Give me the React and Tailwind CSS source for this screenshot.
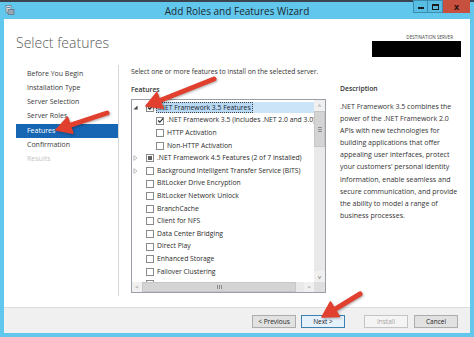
import React from "react";

const navItems = [
  { label: "Before You Begin" },
  { label: "Installation Type" },
  { label: "Server Selection" },
  { label: "Server Roles" },
  { label: "Features", active: true },
  { label: "Confirmation" },
  { label: "Results", disabled: true },
];

const features = [
  { label: ".NET Framework 3.5 Features", level: 1, expander: "open", check: "checked", selected: true },
  { label: ".NET Framework 3.5 (includes .NET 2.0 and 3.0)", level: 2, check: "checked" },
  { label: "HTTP Activation", level: 2 },
  { label: "Non-HTTP Activation", level: 2 },
  { label: ".NET Framework 4.5 Features (2 of 7 installed)", level: 1, expander: "closed", check: "partial" },
  { label: "Background Intelligent Transfer Service (BITS)", level: 1, expander: "closed" },
  { label: "BitLocker Drive Encryption", level: 1 },
  { label: "BitLocker Network Unlock", level: 1 },
  { label: "BranchCache", level: 1 },
  { label: "Client for NFS", level: 1 },
  { label: "Data Center Bridging", level: 1 },
  { label: "Direct Play", level: 1 },
  { label: "Enhanced Storage", level: 1 },
  { label: "Failover Clustering", level: 1 },
];

const descLines = [
  ".NET Framework 3.5 combines the",
  "power of the .NET Framework 2.0",
  "APIs with new technologies for",
  "building applications that offer",
  "appealing user interfaces, protect",
  "your customers' personal identity",
  "information, enable seamless and",
  "secure communication, and provide",
  "the ability to model a range of",
  "business processes.",
];

function Check({ state }) {
  return (
    <span className="flex h-[8px] w-[8px] shrink-0 items-center justify-center border border-[#8a8a8a] bg-white">
      {state === "checked" && (
        <svg viewBox="0 0 8 8" className="h-[7px] w-[7px] overflow-visible">
          <path d="M1.3 4 L3.2 6 L6.9 1.5" fill="none" stroke="#222" strokeWidth="1.3" />
        </svg>
      )}
      {state === "partial" && <span className="h-[4px] w-[4px] bg-[#5e5e5e]" />}
    </span>
  );
}

function Expander({ kind }) {
  if (kind === "open")
    return (
      <svg viewBox="0 0 6 6" className="h-[5px] w-[5px]">
        <path d="M5.5 0.5 L5.5 5.5 L0.5 5.5 Z" fill="#404040" />
      </svg>
    );
  if (kind === "closed")
    return (
      <svg viewBox="0 0 6 8" className="h-[6px] w-[5px]">
        <path d="M0.8 0.8 L5 4 L0.8 7.2 Z" fill="none" stroke="#a0a0a0" strokeWidth="0.9" />
      </svg>
    );
  return null;
}

function Arrow({ x1, y1, x2, y2 }) {
  const dx = x2 - x1;
  const dy = y2 - y1;
  const len = Math.sqrt(dx * dx + dy * dy);
  const ux = dx / len;
  const uy = dy / len;
  const L = 15;
  const W = 8.5;
  const bx = x2 - ux * L;
  const by = y2 - uy * L;
  const pts = `${x2},${y2} ${bx - uy * W},${by + ux * W} ${bx + uy * W},${by - ux * W}`;
  return (
    <g>
      <line x1={x1} y1={y1} x2={bx + ux * 2} y2={by + uy * 2} stroke="#e1402f" strokeWidth="5" strokeLinecap="round" />
      <polygon points={pts} fill="#e1402f" strokeLinejoin="round" stroke="#e1402f" strokeWidth="1.5" />
    </g>
  );
}

function Button({ children, variant }) {
  const cls =
    variant === "primary"
      ? "border-[#3c7fb1] bg-[#e5f1fb] text-[#1e1e1e]"
      : variant === "disabled"
      ? "border-[#c4c4c4] bg-[#f4f4f4] text-[#a3a3a3]"
      : "border-[#adadad] bg-[#e1e1e1] text-[#1e1e1e]";
  return (
    <div className={`flex h-[13px] w-[44px] items-center justify-center border text-[6.5px] ${cls}`}>{children}</div>
  );
}

export default function App() {
  return (
    <div className="relative flex h-[337px] w-[474px] flex-col overflow-hidden bg-[#62c7ec] font-['Open_Sans',sans-serif] text-[#1e1e1e]">
      {/* title bar */}
      <div className="relative flex h-[19px] shrink-0 items-center justify-center border-t-2 border-[#3b4550]">
        <svg viewBox="0 0 10 10" className="absolute left-[5px] top-[3px] h-[10px] w-[10px]">
          <rect x="1" y="0.5" width="5" height="7" fill="#d9dde2" stroke="#6b7785" strokeWidth="0.7" />
          <rect x="3" y="4.5" width="6" height="5" fill="#9aa6b3" stroke="#56626f" strokeWidth="0.6" />
          <rect x="2" y="2" width="3" height="0.9" fill="#3d86c6" />
        </svg>
        <span className="text-[10px] leading-none text-[#1b2a33]">Add Roles and Features Wizard</span>
        <div className="absolute right-[4px] top-[-2px] flex h-[13px]">
          <div className="flex h-full w-[15px] items-end justify-center border border-[#3d8db1] bg-[#58bde3] pb-[3px]">
            <span className="h-[2px] w-[6px] bg-[#1c1c1c]" />
          </div>
          <div className="flex h-full w-[15px] items-center justify-center border border-l-0 border-[#3d8db1] bg-[#58bde3]">
            <span className="h-[6px] w-[7px] border border-t-2 border-[#1c1c1c]" />
          </div>
          <div className="flex h-full w-[27px] items-center justify-center bg-[#c7503f] text-[9px] font-bold leading-none text-[#2a1410]">
            x
          </div>
        </div>
      </div>

      {/* window body */}
      <div className="flex flex-1 flex-col px-[4px] pb-[4px]">
        <div className="flex flex-1 flex-col bg-white">
          {/* header */}
          <div className="flex h-[46px] shrink-0 items-start justify-between pl-[12px] pr-[9px]">
            <div className="mt-[14px] text-[14px] font-light leading-[20px] text-[#5a5a5a]">Select features</div>
            <div className="mt-[15px] flex flex-col items-end">
              <div className="mr-[8px] text-[4.6px] leading-[6px] text-[#444]">DESTINATION SERVER</div>
              <div className="mt-[1px] h-[16px] w-[89px] bg-black" />
            </div>
          </div>

          {/* middle */}
          <div className="flex flex-1 pb-[11px]">
            <div className="flex w-[115px] shrink-0 flex-col border-r border-[#d6d6d6] pt-[2px]">
              {navItems.map((item) => (
                <div
                  key={item.label}
                  className={`ml-[12px] flex h-[14.2px] items-center pl-[11px] text-[7px] ${
                    item.active ? "bg-[#1766b4] text-white" : item.disabled ? "text-[#c4c4c4]" : "text-[#3a3a3a]"
                  }`}
                >
                  {item.label}
                </div>
              ))}
            </div>

            <div className="flex w-[207px] shrink-0 flex-col pl-[12px]">
              <div className="mt-[1px] h-[12px] whitespace-nowrap text-[6.7px] leading-[12px] text-[#333]">
                Select one or more features to install on the selected server.
              </div>
              <div className="mt-[6px] h-[12px] text-[6.8px] font-semibold leading-[12px] text-[#333]">Features</div>
              <div className="mt-[3px] flex h-[194px] w-[195px] flex-col border border-[#9a9ea6]">
                <div className="flex h-[182px]">
                  <div className="flex-1 overflow-hidden pt-[1.7px]">
                    {features.map((f) => (
                      <div key={f.label} className="flex h-[12.6px] items-center">
                        <div className={`flex shrink-0 items-center ${f.level === 2 ? "w-[24px]" : "w-[14px]"} pl-[1px]`}>
                          <Expander kind={f.expander} />
                        </div>
                        <Check state={f.check} />
                        {f.selected ? (
                          <div className="ml-[2px] flex h-[11px] flex-1 items-center bg-[#cbe4f8]">
                            <span className="border border-dotted border-[#444] bg-[#b7d9f5] px-[1px] text-[6.8px] leading-[9px] whitespace-nowrap">
                              {f.label}
                            </span>
                          </div>
                        ) : (
                          <span className="ml-[3px] whitespace-nowrap text-[6.8px] text-[#2b2b2b]">{f.label}</span>
                        )}
                      </div>
                    ))}
                    <div className="flex h-[12.6px] items-center pl-[14px]">
                      <Check />
                    </div>
                  </div>
                  <div className="flex w-[11px] shrink-0 flex-col bg-[#e9e9e9]">
                    <div className="flex h-[11px] items-center justify-center bg-[#f0f0f0] text-[6px] leading-none text-[#6a6a6a]">^</div>
                    <div className="flex h-[36px] items-center justify-center border border-[#c6c6c6] bg-[#d4d4d4]">
                      <div className="flex flex-col gap-[1px]">
                        <span className="h-[1px] w-[4px] bg-[#8a8a8a]" />
                        <span className="h-[1px] w-[4px] bg-[#8a8a8a]" />
                        <span className="h-[1px] w-[4px] bg-[#8a8a8a]" />
                      </div>
                    </div>
                    <div className="flex-1" />
                    <div className="flex h-[11px] items-center justify-center bg-[#f0f0f0] text-[6px] leading-none text-[#6a6a6a]">v</div>
                  </div>
                </div>
                <div className="flex h-[10px] shrink-0 bg-[#e9e9e9]">
                  <div className="flex w-[10px] items-center justify-center bg-[#f0f0f0] text-[6px] leading-none text-[#6a6a6a]">&lt;</div>
                  <div className="flex w-[154px] items-center justify-center border border-[#c6c6c6] bg-[#d4d4d4]">
                    <div className="flex gap-[1px]">
                      <span className="h-[4px] w-[1px] bg-[#8a8a8a]" />
                      <span className="h-[4px] w-[1px] bg-[#8a8a8a]" />
                      <span className="h-[4px] w-[1px] bg-[#8a8a8a]" />
                    </div>
                  </div>
                  <div className="flex-1" />
                  <div className="flex w-[10px] items-center justify-center bg-[#f0f0f0] text-[6px] leading-none text-[#6a6a6a]">&gt;</div>
                  <div className="w-[11px] bg-[#dedede]" />
                </div>
              </div>
            </div>

            <div className="ml-[14px] flex flex-1 flex-col">
              <div className="mt-[18px] h-[12px] text-[6.8px] font-semibold leading-[12px] text-[#333]">Description</div>
              <div className="mt-[6px] text-[7px] leading-[12.1px] text-[#333]">
                {descLines.map((l) => (
                  <div key={l} className="whitespace-nowrap">
                    {l}
                  </div>
                ))}
              </div>
            </div>
          </div>

          {/* footer */}
          <div className="flex h-[26px] shrink-0 items-start justify-end border-t border-[#dcdcdc] bg-[#f0f0f0] pr-[12px] pt-[7px]">
            <Button>&lt; Previous</Button>
            <div className="ml-[5px]">
              <Button variant="primary">Next &gt;</Button>
            </div>
            <div className="ml-[19px]">
              <Button variant="disabled">Install</Button>
            </div>
            <div className="ml-[6px]">
              <Button>Cancel</Button>
            </div>
          </div>
        </div>
      </div>

      {/* annotation arrows */}
      <svg
        className="pointer-events-none absolute inset-0 h-[337px] w-[474px] drop-shadow-[1px_1px_1px_rgba(0,0,0,0.3)]"
        viewBox="0 0 474 337"
      >
        <Arrow x1={214} y1={79} x2={146} y2={106} />
        <Arrow x1={107} y1={113} x2={56} y2={130} />
        <Arrow x1={360} y1={294} x2={322} y2={317} />
      </svg>
    </div>
  );
}
